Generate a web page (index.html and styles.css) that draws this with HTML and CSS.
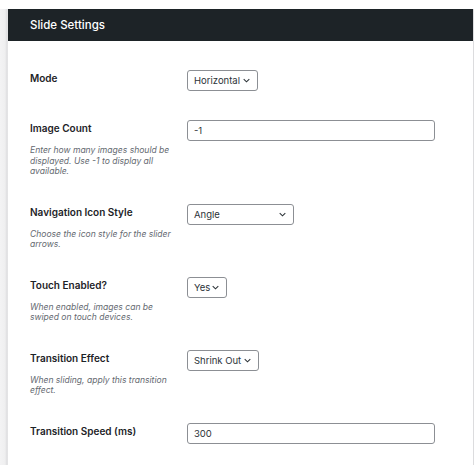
FILE: index.html
```html
<!DOCTYPE html>
<html>
<head>
<meta charset="utf-8">
<link rel="stylesheet" href="styles.css">
</head>
<body>
<div class="wrap">
  <div class="side"></div>
  <div class="panel">
    <div class="head">Slide Settings</div>
    <div class="body">
      <div class="row short">
        <div class="lab"><div class="label">Mode</div></div>
        <div class="field"><div class="select w-hor"><span>Horizontal</span><svg class="chev" viewBox="0 0 8 5"><path d="M0.8 0.9 L4 4 L7.2 0.9"/></svg></div></div>
      </div>
      <div class="row">
        <div class="lab"><div class="label">Image Count</div><div class="desc">Enter how many images should be displayed. Use -1 to display all available.</div></div>
        <div class="field"><div class="input">-1</div></div>
      </div>
      <div class="row">
        <div class="lab"><div class="label">Navigation Icon Style</div><div class="desc">Choose the icon style for the slider arrows.</div></div>
        <div class="field"><div class="select w-angle"><span>Angle</span><svg class="chev" viewBox="0 0 8 5"><path d="M0.8 0.9 L4 4 L7.2 0.9"/></svg></div></div>
      </div>
      <div class="row">
        <div class="lab"><div class="label">Touch Enabled?</div><div class="desc">When enabled, images can be swiped on touch devices.</div></div>
        <div class="field"><div class="select w-yes"><span>Yes</span><svg class="chev" viewBox="0 0 8 5"><path d="M0.8 0.9 L4 4 L7.2 0.9"/></svg></div></div>
      </div>
      <div class="row">
        <div class="lab"><div class="label">Transition Effect</div><div class="desc">When sliding, apply this transition effect.</div></div>
        <div class="field"><div class="select w-shrink"><span>Shrink Out</span><svg class="chev" viewBox="0 0 8 5"><path d="M0.8 0.9 L4 4 L7.2 0.9"/></svg></div></div>
      </div>
      <div class="row">
        <div class="lab"><div class="label">Transition Speed (ms)</div></div>
        <div class="field"><div class="input">300</div></div>
      </div>
    </div>
  </div>
</div>
</body>
</html>
```
FILE: styles.css
```css
html, body {
  margin: 0;
  padding: 0;
  background: #ffffff;
}
body {
  font-family: Inter, "Liberation Sans", sans-serif;
  color: #1d2327;
  padding-top: 9px;
  height: 465px;
  box-sizing: border-box;
  overflow: hidden;
}
.wrap {
  display: flex;
  height: 100%;
}
.side {
  width: 8px;
  flex: none;
  background: linear-gradient(to right, #f3f3f4 0, #efeff0 5px, #dedee0 7px, #e9e9ea 8px);
}
.panel {
  flex: 1;
  border-right: 1px solid #dcdcde;
  background: #fff;
}
.head {
  height: 32px;
  background: #1d2327;
  color: #fff;
  font-size: 11.5px;
  font-weight: 500;
  line-height: 33px;
  padding-left: 22px;
}
.body {
  padding: 29px 0 0 22px;
  display: flex;
  flex-direction: column;
  gap: 27px;
}
.row {
  display: grid;
  grid-template-columns: 157px 1fr;
  align-items: start;
}
.row.short {
  min-height: 23px;
}
.label {
  font-size: 10px;
  font-weight: 600;
  line-height: 14px;
  padding-top: 1px;
  color: #1d2327;
}
.desc {
  margin-top: 10px;
  font-size: 8.55px;
  font-style: italic;
  line-height: 10.5px;
  color: #646970;
  width: 145px;
}
.select, .input {
  height: 21px;
  box-sizing: border-box;
  border: 1px solid #8c8f94;
  border-radius: 3px;
  font-size: 9.5px;
  color: #2c3338;
  display: flex;
  align-items: center;
  padding-left: 6px;
  background: #fff;
  white-space: nowrap;
}
.select {
  justify-content: space-between;
  padding-right: 7px;
}
.input {
  width: 248px;
}
.w-hor { width: 71px; }
.w-angle { width: 107px; }
.w-yes { width: 40px; }
.w-shrink { width: 72px; }
.chev {
  width: 7px;
  height: 5px;
  flex: none;
  fill: none;
  stroke: #2c3338;
  stroke-width: 1.2;
}
```
